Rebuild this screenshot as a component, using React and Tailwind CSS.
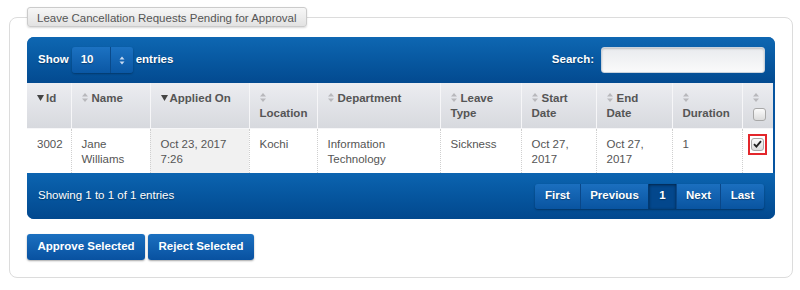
import React from "react";

const font = { fontFamily: '"Liberation Sans", Arial, sans-serif' };

function SortBoth() {
   return (
      <svg width="6" height="9" viewBox="0 0 6 9" className="inline-block mr-[4px] align-[0px]">
         <path d="M3 0 L6 3.5 L0 3.5 Z" fill="#b8b8bc" />
         <path d="M0 5.5 L6 5.5 L3 9 Z" fill="#b8b8bc" />
      </svg>
   );
}

function SortDesc() {
   return (
      <svg width="7" height="6" viewBox="0 0 7 6" className="inline-block mr-[2px] align-[1px]">
         <path d="M0 0 L7 0 L3.5 6 Z" fill="#444" />
      </svg>
   );
}

function Check({ checked }) {
   return (
      <span className="inline-flex w-[13px] h-[13px] items-center justify-center rounded-[3px] border border-[#a8a8a8] bg-gradient-to-b from-[#fbfbfb] to-[#dcdcdc]">
         {checked && (
            <svg width="9" height="8" viewBox="0 0 9 8">
               <path d="M1 4.2 L3.4 6.6 L8 1.2" stroke="#222" strokeWidth="1.9" fill="none" />
            </svg>
         )}
      </span>
   );
}

const cols = [
   { w: 44, head: <><SortDesc />Id</> },
   { w: 79, head: <><SortBoth />Name</> },
   { w: 99, head: <><SortDesc />Applied On</> },
   { w: 68, head: <><SortBoth /><br />Location</> },
   { w: 123, head: <><SortBoth />Department</> },
   { w: 81, head: <><SortBoth />Leave<br />Type</> },
   { w: 75, head: <><SortBoth />Start<br />Date</> },
   { w: 76, head: <><SortBoth />End<br />Date</> },
   { w: 70, head: <><SortBoth /><br />Duration</> },
   { w: 31, head: <><SortBoth /><br /><span className="inline-block mt-[2px]"><Check /></span></> },
];

const row = [
   "3002",
   <>Jane<br />Williams</>,
   <>Oct 23, 2017<br />7:26</>,
   "Kochi",
   <>Information<br />Technology</>,
   "Sickness",
   <>Oct 27,<br />2017</>,
   <>Oct 27,<br />2017</>,
   "1",
];

export default function App() {
   return (
      <div className="w-[800px] h-[290px] bg-white overflow-hidden" style={font}>
         <fieldset className="ml-[9px] mt-[7px] w-[784px] border border-[#dcdcdc] rounded-[8px] px-[17px] pt-[10px] pb-[17px]">
            <legend className="h-[20px] px-[9px] leading-[20px] text-[11.5px] text-[#555] bg-gradient-to-b from-[#f7f7f7] to-[#e2e2e2] border border-[#cbcbcb] rounded-[3px] shadow-[0_1px_2px_rgba(0,0,0,0.15)]">
               Leave Cancellation Requests Pending for Approval
            </legend>

            <div className="w-[748px] rounded-[7px] bg-[#0654a0] overflow-hidden">
               {/* toolbar */}
               <div className="h-[46px] flex items-center justify-between pl-[11px] pr-[10px] bg-gradient-to-b from-[#0e67b2] to-[#034a90] text-white text-[11.5px] font-bold [text-shadow:0_1px_1px_rgba(0,0,0,0.35)]">
                  <div className="flex items-center">
                     <span>Show</span>
                     <div className="ml-[3px] flex h-[26px] w-[61px] rounded-[3px] bg-gradient-to-b from-[#1c72c2] to-[#0a57a4] shadow-[0_1px_2px_rgba(0,0,0,0.3)]">
                        <span className="w-[38px] pl-[9px] leading-[24px]">10</span>
                        <span className="flex-1 border-l border-[#0a4a8a] flex items-center justify-center">
                           <svg width="6" height="9" viewBox="0 0 6 9">
                              <path d="M3 0.5 L5.5 3.5 L0.5 3.5 Z" fill="#c9daf0" />
                              <path d="M0.5 5.5 L5.5 5.5 L3 8.5 Z" fill="#c9daf0" />
                           </svg>
                        </span>
                     </div>
                     <span className="ml-[3px]">entries</span>
                  </div>
                  <div className="flex items-center">
                     <span>Search:</span>
                     <div className="ml-[7px] w-[164px] h-[26px] rounded-[3px] border border-[#c9d2dc] bg-gradient-to-b from-[#e9ebee] to-[#fafafa] shadow-[inset_0_1px_2px_rgba(0,0,0,0.2)]" />
                  </div>
               </div>

               {/* table */}
               <table className="w-[746px] table-fixed border-collapse text-[11.5px] text-[#555]">
                  <colgroup>
                     {cols.map((c, i) => (
                        <col key={i} style={{ width: c.w }} />
                     ))}
                  </colgroup>
                  <thead>
                     <tr className="h-[45px] bg-gradient-to-b from-[#ecedf1] to-[#d7d9de]">
                        {cols.map((c, i) => (
                           <th
                              key={i}
                              className="align-top text-left font-bold pt-[8px] pl-[10px] pr-[2px] leading-[15px] whitespace-nowrap border-l border-[#f6f6f8] first:border-l-0 border-b border-[#cfd1d6]"
                           >
                              {c.head}
                           </th>
                        ))}
                     </tr>
                  </thead>
                  <tbody>
                     <tr className="h-[45px] bg-white">
                        {row.map((v, i) => (
                           <td
                              key={i}
                              className={`align-top pt-[8px] pl-[10px] pr-[2px] leading-[15px] whitespace-nowrap border-l border-dotted border-[#cfcfcf] first:border-l-0 ${
                                 i === 2 ? "bg-[#f1f1f1]" : ""
                              }`}
                           >
                              {v}
                           </td>
                        ))}
                        <td className="align-top pt-[5px] pl-[5px] border-l border-dotted border-[#cfcfcf]">
                           <span className="flex w-[19px] h-[21px] items-center justify-center border-2 border-[#e3262b]">
                              <Check checked />
                           </span>
                        </td>
                     </tr>
                  </tbody>
               </table>

               {/* footer */}
               <div className="h-[46px] flex items-center justify-between pl-[11px] pr-[11px] bg-gradient-to-b from-[#0c64b0] to-[#02488e] text-white text-[11.5px] [text-shadow:0_1px_1px_rgba(0,0,0,0.35)]">
                  <span>Showing 1 to 1 of 1 entries</span>
                  <div className="flex h-[25px] rounded-[3px] shadow-[0_1px_2px_rgba(0,0,0,0.35)] overflow-hidden font-bold">
                     <span className="w-[45px] flex items-center justify-center bg-gradient-to-b from-[#1b6fbf] to-[#0954a0]">First</span>
                     <span className="w-[68px] flex items-center justify-center border-l border-[#0a4788] bg-gradient-to-b from-[#1b6fbf] to-[#0954a0]">Previous</span>
                     <span className="w-[28px] flex items-center justify-center border-l border-[#023a72] bg-[#03478c] shadow-[inset_0_1px_3px_rgba(0,0,0,0.5)]">1</span>
                     <span className="w-[44px] flex items-center justify-center border-l border-[#0a4788] bg-gradient-to-b from-[#1b6fbf] to-[#0954a0]">Next</span>
                     <span className="w-[44px] flex items-center justify-center border-l border-[#0a4788] bg-gradient-to-b from-[#1b6fbf] to-[#0954a0]">Last</span>
                  </div>
               </div>
            </div>

            <div className="mt-[15px] flex gap-[3px] text-white text-[11.5px] font-bold [text-shadow:0_1px_1px_rgba(0,0,0,0.35)]">
               <button className="w-[118px] h-[26px] rounded-[3px] bg-gradient-to-b from-[#1b70c0] to-[#0851a0] shadow-[0_1px_2px_rgba(0,0,0,0.35)]">
                  Approve Selected
               </button>
               <button className="w-[106px] h-[26px] rounded-[3px] bg-gradient-to-b from-[#1b70c0] to-[#0851a0] shadow-[0_1px_2px_rgba(0,0,0,0.35)]">
                  Reject Selected
               </button>
            </div>
         </fieldset>
      </div>
   );
}
